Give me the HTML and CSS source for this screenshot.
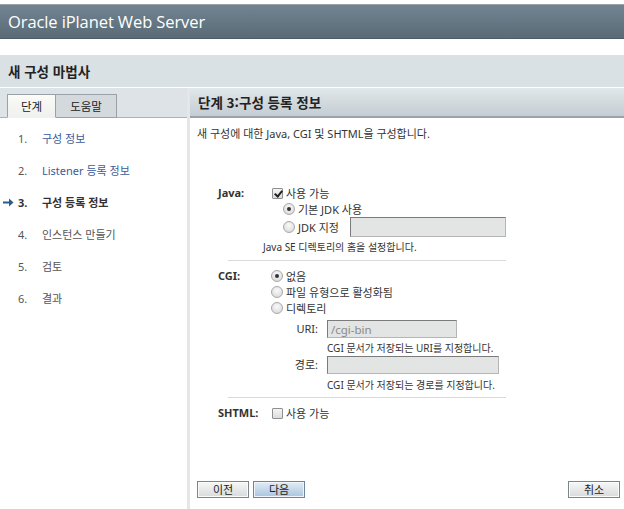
FILE: index.html
```html
<!DOCTYPE html>
<html lang="ko">
<head>
<meta charset="utf-8">
<title>새 구성 마법사</title>
<link rel="stylesheet" href="styles.css">
</head>
<body>
<div class="page">
  <div class="topstrip"></div>
  <header class="brand">Oracle iPlanet Web Server</header>
  <div class="gap"></div>
  <div class="wiz-title">새 구성 마법사</div>
  <div class="main">
    <aside class="left">
      <div class="tabs">
        <div class="tab active">단계</div>
        <div class="tab">도움말</div>
      </div>
      <ol class="steps">
        <li class="step"><span class="mark"></span><span class="num">1.</span><span class="lbl link">구성 정보</span></li>
        <li class="step"><span class="mark"></span><span class="num">2.</span><span class="lbl link">Listener 등록 정보</span></li>
        <li class="step current"><span class="mark"><svg width="11" height="9" viewBox="0 0 11 9"><path d="M0 3.5H6V0.5L10.5 4.5L6 8.5V5.5H0Z" fill="#2c5a8c"/></svg></span><span class="num">3.</span><span class="lbl">구성 등록 정보</span></li>
        <li class="step"><span class="mark"></span><span class="num">4.</span><span class="lbl">인스턴스 만들기</span></li>
        <li class="step"><span class="mark"></span><span class="num">5.</span><span class="lbl">검토</span></li>
        <li class="step"><span class="mark"></span><span class="num">6.</span><span class="lbl">결과</span></li>
      </ol>
    </aside>
    <div class="divider"></div>
    <section class="right">
      <div class="right-head">단계 3:구성 등록 정보</div>
      <div class="right-body">
        <p class="desc">새 구성에 대한 Java, CGI 및 SHTML을 구성합니다.</p>
        <div class="form">
          <div class="sec java">
            <div class="flabel">Java:</div>
            <div class="fctl">
              <div class="row r16"><span class="cb checked"></span><span>사용 가능</span></div>
              <div class="row r16 indent"><span class="rb on"></span><span>기본 JDK 사용</span></div>
              <div class="row r20 indent"><span class="rb"></span><span class="w-jdk">JDK 지정</span><span class="inp jdk"></span></div>
            </div>
            <div class="hint java-hint">Java SE 디렉토리의 홈을 설정합니다.</div>
          </div>
          <div class="sep"></div>
          <div class="sec cgi">
            <div class="flabel">CGI:</div>
            <div class="fctl">
              <div class="row r16"><span class="rb on"></span><span>없음</span></div>
              <div class="row r16"><span class="rb"></span><span>파일 유형으로 활성화됨</span></div>
              <div class="row r16"><span class="rb"></span><span>디렉토리</span></div>
              <div class="sub">
                <div class="sublabel">URI:</div>
                <div class="inp uri">/cgi-bin</div>
                <div class="hint subhint">CGI 문서가 저장되는 URI를 지정합니다.</div>
                <div class="sublabel path">경로:</div>
                <div class="inp pathinp"></div>
                <div class="hint subhint h2">CGI 문서가 저장되는 경로를 지정합니다.</div>
              </div>
            </div>
          </div>
          <div class="sep sep2"></div>
          <div class="sec shtml">
            <div class="flabel">SHTML:</div>
            <div class="fctl">
              <div class="row r16"><span class="cb"></span><span>사용 가능</span></div>
            </div>
          </div>
        </div>
        <div class="buttons">
          <button class="btn">이전</button>
          <button class="btn primary">다음</button>
          <span class="spacer"></span>
          <button class="btn">취소</button>
        </div>
      </div>
    </section>
  </div>
</div>
</body>
</html>
```
FILE: styles.css
```css
* { box-sizing: border-box; }
html, body { margin: 0; padding: 0; background: #fff; }
body {
  font-family: "Noto Sans", "Noto Sans CJK KR", sans-serif;
  font-size: 11px;
  color: #333;
}
.page { width: 624px; height: 509px; display: flex; flex-direction: column; overflow: hidden; }
.topstrip { height: 5px; background: #fff; border-bottom: 1px solid #9aa3a9; }
.brand {
  height: 34px;
  background: linear-gradient(#718491, #5a6b77);
  color: #fff;
  font-family: "Open Sans", "Noto Sans", sans-serif;
  font-size: 16.5px;
  letter-spacing: -0.1px;
  line-height: 33px;
  padding-left: 8px;
  border-bottom: 1px solid #4e5d68;
}
.gap { height: 16px; }
.wiz-title {
  height: 33px;
  background: #dae1e4;
  font-family: "Noto Sans CJK KR", sans-serif;
  font-weight: bold;
  font-size: 13.5px;
  line-height: 32px;
  padding-left: 8px;
  color: #222;
  border-bottom: 1px solid #fff;
}
.main { flex: 1; display: flex; }
.left { width: 187px; display: flex; flex-direction: column; }
.tabs {
  height: 30px;
  background: #dde3e6;
  display: flex;
  align-items: flex-end;
  padding-left: 7px;
  border-bottom: 1px solid #a9b2b7;
}
.tab {
  height: 24px;
  margin-bottom: -1px;
  border: 1px solid #98a2a8;
  background: #d3d9dc;
  font-family: "Noto Sans CJK KR", sans-serif;
  font-size: 11.5px;
  color: #222;
  display: flex;
  align-items: center;
  justify-content: center;
  width: 61px;
  border-left: 0;
}
.tab.active {
  width: 49px;
  border-left: 1px solid #98a2a8;
  background: linear-gradient(#fbfbf7, #eef1ee);
  border-bottom: 1px solid #eef1ee;
}
.steps { list-style: none; margin: 0; padding: 4px 0 0 0; }
.step { height: 32px; display: flex; align-items: center; font-family: "Noto Sans", "Noto Sans CJK KR", sans-serif; font-size: 11px; color: #555; }
.step .mark { width: 18px; padding-left: 3px; display: flex; align-items: center; }
.step .num { width: 24px; color: #555; }
.step .lbl.link { color: #3b5a9c; }
.step.current .num, .step.current .lbl { font-weight: bold; color: #333; }
.divider { width: 3px; background: #e4e6e7; }
.right { flex: 1; display: flex; flex-direction: column; }
.right-head {
  height: 30px;
  background: linear-gradient(#e1e7ea, #c4cdd2);
  border-bottom: 2px solid #98a4ab;
  font-family: "Noto Sans CJK KR", sans-serif;
  font-weight: bold;
  font-size: 13.5px;
  line-height: 28px;
  padding-left: 8px;
  color: #222;
}
.right-body { flex: 1; display: flex; flex-direction: column; padding: 0 4px 11px 7px; }
.desc { margin: 9px 0 0 0; height: 14px; line-height: 14px; font-size: 11px; }
.form { margin: 44px 0 0 21px; width: 288px; }
.sec { display: grid; grid-template-columns: 53px 235px; }
.flabel { font-weight: bold; height: 16px; line-height: 16px; color: #333; }
.fctl { display: flex; flex-direction: column; }
.row { display: flex; align-items: center; gap: 3px; }
.row > * { flex-shrink: 0; }
.r16 { height: 16px; }
.r20 { height: 20px; }
.indent { padding-left: 12px; }
.w-jdk { width: 49px; }
.hint { font-size: 10px; height: 14px; line-height: 14px; }
.java-hint { grid-column: 1 / 3; margin: 3px 0 0 45px; }
.sep { height: 1px; background: #d6dadc; margin: 6px 0 0 10px; }
.sep2 { margin-top: 5px; }
.cgi { margin-top: 7px; }
.shtml { margin-top: 7px; }
.cb {
  width: 11px; height: 11px;
  border: 1px solid #8f8f8f;
  background: linear-gradient(#f4f4f4, #dcdcdc);
  border-radius: 1px;
  position: relative;
  margin-left: 1px;
}
.cb.checked::after {
  content: "";
  position: absolute;
  left: 3px; top: 0px;
  width: 3px; height: 6px;
  border: solid #222;
  border-width: 0 2px 2px 0;
  transform: rotate(40deg);
}
.rb {
  width: 12px; height: 12px;
  border-radius: 50%;
  border: 1px solid #a8a8a8;
  background: radial-gradient(circle at 50% 35%, #fafafa, #d4d4d4);
  position: relative;
}
.rb.on::after {
  content: "";
  position: absolute;
  left: 3px; top: 3px;
  width: 4px; height: 4px;
  border-radius: 50%;
  background: #333;
}
.inp {
  height: 20px;
  background: #e3e4e4;
  border: 1px solid #b5b5b5;
  border-top-color: #7b7b7b;
  border-left-color: #7b7b7b;
  font-size: 11.5px;
  color: #8a8a8a;
  padding-left: 3px;
  line-height: 17px;
}
.jdk { width: 156px; }
.sub { display: grid; grid-template-columns: 56px auto; align-items: center; margin-top: 4px; }
.sublabel { text-align: right; padding-right: 9px; height: 18px; line-height: 18px; font-size: 11px; }
.uri { width: 130px; height: 18px; }
.pathinp { width: 172px; height: 18px; margin-top: 1px; }
.sublabel.path { margin-top: 1px; }
.subhint { grid-column: 2; margin-top: 3px; }
.subhint.h2 { margin-top: 4px; }
.buttons { margin-top: auto; display: flex; align-items: center; gap: 4px; padding-right: 0; }
.spacer { flex: 1; }
.btn {
  height: 17px;
  width: 52px;
  font-family: "Noto Sans CJK KR", sans-serif;
  font-size: 11px;
  line-height: 13px;
  color: #222;
  padding: 0;
  border: 1px solid #7d8589;
  border-radius: 0;
  background: linear-gradient(#f7f7f7, #d8dadb);
  box-shadow: inset 0 0 0 1px #fbfbfb;
}
.btn.primary { background: linear-gradient(#e2ecf5, #aac5df); border-color: #6c86a0; box-shadow: inset 0 0 0 1px #eef4fa; }
```
